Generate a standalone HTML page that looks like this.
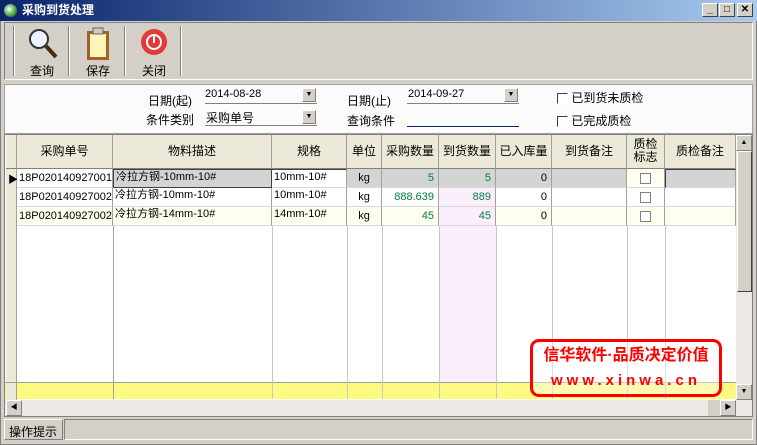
<!DOCTYPE html>
<html><head><meta charset="utf-8"><style>
*{margin:0;padding:0;box-sizing:border-box}
body{width:757px;height:445px;background:#d4d0c8;font-family:"Liberation Sans","Noto Sans CJK SC",sans-serif;font-size:12px;color:#000;position:relative;overflow:hidden}
.a{position:absolute}
.title{left:0;top:0;width:757px;height:21px;background:linear-gradient(to right,#0a246a,#a6caf0);color:#fff;font-weight:bold;font-size:12px;line-height:21px;padding-left:22px}
.wb{top:3px;width:16px;height:14px;background:#d4d0c8;border:1px solid;border-color:#fff #404040 #404040 #fff;font-size:10px;line-height:12px;text-align:center;font-weight:bold;color:#000}
.tool{top:24px;width:56px;height:54px;text-align:center;font-size:12px}
.sep{top:26px;width:2px;height:50px;border-left:1px solid #808080;border-right:1px solid #fff}
.cell{position:absolute;border-right:1px solid #a0a0a0;border-bottom:1px solid #d8d8d8;height:19px;line-height:18px;overflow:hidden;white-space:nowrap;font-size:11px}
.hd{position:absolute;top:135px;height:34px;background:#ece9d8;border-right:1px solid #a0a0a0;border-bottom:1px solid #808080;text-align:center;line-height:33px;font-size:12px}
.cb{display:inline-block;width:11px;height:11px;border:1px solid #808080;background:#fff;vertical-align:middle}
.dd{width:14px;height:14px;background:#d4d0c8;border:1px solid;border-color:#fff #808080 #808080 #fff;font-size:7px;text-align:center;line-height:12px}
</style></head><body>
<div class="a" style="left:0;top:0;width:757px;height:445px;border:1px solid #808080"></div>
<div class="a title">采购到货处理</div>
<div class="a" style="left:4px;top:4px;width:13px;height:13px;border-radius:50%;background:radial-gradient(circle at 40% 40%,#fff,#3a9a3a 60%,#1a5a1a)"></div>
<div class="a wb" style="left:702px">_</div>
<div class="a wb" style="left:719px">□</div>
<div class="a wb" style="left:737px">✕</div>
<div class="a" style="left:4px;top:22px;width:749px;height:58px;border:1px solid #808080;border-right-color:#fff;border-bottom-color:#fff"></div>
<div class="a sep" style="left:13px"></div>
<div class="a tool" style="left:14px"><svg width="34" height="36" style="margin-top:2px"><circle cx="14" cy="13" r="9" fill="#eef4ff" stroke="#333" stroke-width="2"/><line x1="21" y1="20" x2="31" y2="31" stroke="#4a2a10" stroke-width="4"/></svg><div style="margin-top:-3px">查询</div></div>
<div class="a sep" style="left:68px"></div>
<div class="a tool" style="left:70px"><svg width="34" height="36" style="margin-top:2px"><rect x="6" y="5" width="22" height="29" fill="#a0612a"/><rect x="9" y="8" width="16" height="23" fill="#fdf6b8"/><rect x="12" y="2" width="10" height="6" fill="#ccc" stroke="#666"/></svg><div style="margin-top:-3px">保存</div></div>
<div class="a sep" style="left:124px"></div>
<div class="a tool" style="left:126px"><svg width="34" height="36" style="margin-top:2px"><circle cx="17" cy="16" r="13" fill="#e23a3a"/><circle cx="17" cy="16" r="7" fill="none" stroke="#fff" stroke-width="2"/><line x1="17" y1="9" x2="17" y2="17" stroke="#fff" stroke-width="2"/></svg><div style="margin-top:-3px">关闭</div></div>
<div class="a sep" style="left:180px"></div>

<div class="a" style="left:4px;top:84px;width:749px;height:50px;background:#fbfbfb;border:1px solid #a0a0a0"></div>
<div class="a" style="left:148px;top:92px">日期(起)</div>
<div class="a" style="left:205px;top:88px;font-size:11px">2014-08-28</div>
<div class="a" style="left:205px;top:103px;width:112px;border-top:1px solid #808080"></div>
<div class="a dd" style="left:302px;top:88px">▼</div>
<div class="a" style="left:146px;top:111px">条件类别</div>
<div class="a" style="left:206px;top:109px">采购单号</div>
<div class="a" style="left:205px;top:125px;width:112px;border-top:1px solid #808080"></div>
<div class="a dd" style="left:302px;top:110px">▼</div>
<div class="a" style="left:347px;top:92px">日期(止)</div>
<div class="a" style="left:408px;top:88px;font-size:11px">2014-09-27</div>
<div class="a" style="left:407px;top:103px;width:112px;border-top:1px solid #808080"></div>
<div class="a dd" style="left:504px;top:88px">▼</div>
<div class="a" style="left:347px;top:112px">查询条件</div>
<div class="a" style="left:407px;top:126px;width:112px;border-top:1px solid #0a246a"></div>
<div class="a" style="left:557px;top:89px"><span class="cb" style="border-color:#404040 #fff #fff #404040"></span> 已到货未质检</div>
<div class="a" style="left:557px;top:112px"><span class="cb" style="border-color:#404040 #fff #fff #404040"></span> 已完成质检</div>

<div class="a" style="left:4px;top:134px;width:749px;height:283px;border:1px solid #808080;background:#fff"></div>
<!-- vertical col lines body -->
<div class="a" style="left:6px;top:135px;width:11px;height:265px;background:#ece9d8;border-right:1px solid #a0a0a0"></div>
<div class="a" style="left:439px;top:224px;width:57px;height:158px;background:#fbeefb"></div>
<div class="a" style="left:5px;top:382px;width:731px;height:17px;background:#fefa80;border-top:1px solid #a0a0a0"></div>
<div class="a" style="left:6px;top:382px;width:11px;height:17px;background:#ece9d8;border-right:1px solid #a0a0a0;border-top:1px solid #a0a0a0"></div>
<div class="a" style="left:113px;top:169px;height:230px;border-left:1px solid #a0a0a0"></div>
<div class="a" style="left:272px;top:169px;height:230px;border-left:1px solid #c8c8c8"></div>
<div class="a" style="left:347px;top:169px;height:230px;border-left:1px solid #c8c8c8"></div>
<div class="a" style="left:382px;top:169px;height:230px;border-left:1px solid #c8c8c8"></div>
<div class="a" style="left:439px;top:169px;height:230px;border-left:1px solid #c8c8c8"></div>
<div class="a" style="left:496px;top:169px;height:230px;border-left:1px solid #c8c8c8"></div>
<div class="a" style="left:552px;top:169px;height:230px;border-left:1px solid #c8c8c8"></div>
<div class="a" style="left:627px;top:169px;height:230px;border-left:1px solid #c8c8c8"></div>
<div class="a" style="left:665px;top:169px;height:230px;border-left:1px solid #c8c8c8"></div>

<div class="hd" style="left:6px;width:11px"></div>
<div class="hd" style="left:17px;width:96px">采购单号</div>
<div class="hd" style="left:113px;width:159px">物料描述</div>
<div class="hd" style="left:272px;width:75px">规格</div>
<div class="hd" style="left:347px;width:35px">单位</div>
<div class="hd" style="left:382px;width:57px">采购数量</div>
<div class="hd" style="left:439px;width:57px">到货数量</div>
<div class="hd" style="left:496px;width:56px">已入库量</div>
<div class="hd" style="left:552px;width:75px">到货备注</div>
<div class="hd" style="left:627px;width:38px;line-height:13px;padding-top:3px">质检<br>标志</div>
<div class="hd" style="left:665px;width:71px">质检备注</div>

<div class="a" style="left:8px;top:171px;font-size:10px">▶</div>
<!-- row 1 -->
<div class="cell" style="left:17px;top:169px;width:96px;background:#fff;padding-left:2px">18P020140927001</div>
<div class="cell" style="left:113px;top:169px;width:159px;background:#d4d4d4;border:1px solid #404040;line-height:14px;padding-left:2px">冷拉方钢-10mm-10#</div>
<div class="cell" style="left:272px;top:169px;width:75px;background:#fff;border-top:1px solid #404040;line-height:14px;padding-left:2px">10mm-10#</div>
<div class="cell" style="left:347px;top:169px;width:35px;background:#d4d4d4;text-align:center">kg</div>
<div class="cell" style="left:382px;top:169px;width:57px;background:#d4d4d4;text-align:right;padding-right:4px;color:#008040">5</div>
<div class="cell" style="left:439px;top:169px;width:57px;background:#d4d4d4;text-align:right;padding-right:4px;color:#008040">5</div>
<div class="cell" style="left:496px;top:169px;width:56px;background:#d4d4d4;text-align:right;padding-right:4px">0</div>
<div class="cell" style="left:552px;top:169px;width:75px;background:#d4d4d4"></div>
<div class="cell" style="left:627px;top:169px;width:38px;background:#fffff0;text-align:center"><span class="cb"></span></div>
<div class="cell" style="left:665px;top:169px;width:71px;background:#d4d4d4;border-left:1px solid #404040;border-top:1px solid #404040"></div>
<!-- row 2 -->
<div class="cell" style="left:17px;top:188px;width:96px;background:#fff;padding-left:2px">18P020140927002</div>
<div class="cell" style="left:113px;top:188px;width:159px;background:#fff;line-height:14px;padding-left:2px">冷拉方钢-10mm-10#</div>
<div class="cell" style="left:272px;top:188px;width:75px;background:#fff;line-height:14px;padding-left:2px">10mm-10#</div>
<div class="cell" style="left:347px;top:188px;width:35px;background:#fff;text-align:center">kg</div>
<div class="cell" style="left:382px;top:188px;width:57px;background:#fff;text-align:right;padding-right:4px;color:#008040">888.639</div>
<div class="cell" style="left:439px;top:188px;width:57px;background:#fbeefb;text-align:right;padding-right:4px;color:#008040">889</div>
<div class="cell" style="left:496px;top:188px;width:56px;background:#fff;text-align:right;padding-right:4px">0</div>
<div class="cell" style="left:552px;top:188px;width:75px;background:#fff"></div>
<div class="cell" style="left:627px;top:188px;width:38px;background:#fff;text-align:center"><span class="cb"></span></div>
<div class="cell" style="left:665px;top:188px;width:71px;background:#fff"></div>
<!-- row 3 -->
<div class="cell" style="left:17px;top:207px;width:96px;background:#fffff0;padding-left:2px">18P020140927002</div>
<div class="cell" style="left:113px;top:207px;width:159px;background:#fffff0;line-height:14px;padding-left:2px">冷拉方钢-14mm-10#</div>
<div class="cell" style="left:272px;top:207px;width:75px;background:#fffff0;line-height:14px;padding-left:2px">14mm-10#</div>
<div class="cell" style="left:347px;top:207px;width:35px;background:#fffff0;text-align:center">kg</div>
<div class="cell" style="left:382px;top:207px;width:57px;background:#fffff0;text-align:right;padding-right:4px;color:#008040">45</div>
<div class="cell" style="left:439px;top:207px;width:57px;background:#fbeefb;text-align:right;padding-right:4px;color:#008040">45</div>
<div class="cell" style="left:496px;top:207px;width:56px;background:#fffff0;text-align:right;padding-right:4px">0</div>
<div class="cell" style="left:552px;top:207px;width:75px;background:#fffff0"></div>
<div class="cell" style="left:627px;top:207px;width:38px;background:#fffff0;text-align:center"><span class="cb"></span></div>
<div class="cell" style="left:665px;top:207px;width:71px;background:#fffff0"></div>

<!-- v scrollbar -->
<div class="a" style="left:736px;top:135px;width:16px;height:265px;background:#ece9e4"></div>
<div class="a dd" style="left:736px;top:135px;width:16px;height:16px;line-height:13px">▲</div>
<div class="a" style="left:737px;top:151px;width:15px;height:141px;background:#d4d0c8;border:1px solid;border-color:#fff #404040 #404040 #fff"></div>
<div class="a dd" style="left:736px;top:384px;width:16px;height:16px;line-height:13px">▼</div>
<!-- h scrollbar -->
<div class="a" style="left:5px;top:400px;width:747px;height:16px;background:#ece9e4"></div>
<div class="a dd" style="left:6px;top:400px;width:16px;height:16px;line-height:13px">◀</div>
<div class="a" style="left:708px;top:400px;width:16px;height:16px;background:#d4d0c8"></div>
<div class="a dd" style="left:720px;top:400px;width:16px;height:16px;line-height:13px">▶</div>

<!-- watermark -->
<div class="a" style="left:530px;top:339px;width:192px;height:58px;border:3px solid #f00;border-radius:9px;background:rgba(255,255,255,0.4);color:#f00;text-align:center;font-weight:bold">
<div style="font-size:16px;line-height:28px;margin-top:0px">信华软件·品质决定价值</div>
<div style="font-size:15px;letter-spacing:4px;line-height:22px">www.xinwa.cn</div></div>

<!-- status bar -->
<div class="a" style="left:4px;top:419px;width:59px;height:21px;border:1px solid;border-color:#fff #808080 #808080 #fff;padding:3px 0 0 4px;font-size:12px">操作提示</div>
<div class="a" style="left:64px;top:419px;width:689px;height:21px;border:1px solid;border-color:#808080 #fff #fff #808080"></div>
</body></html>
